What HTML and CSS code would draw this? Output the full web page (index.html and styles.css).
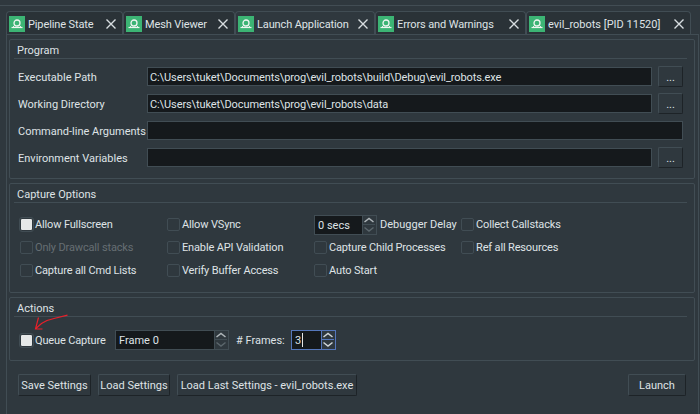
FILE: index.html
```html
<!DOCTYPE html>
<html lang="en">
<head>
<meta charset="utf-8">
<title>Launch Application</title>
<link rel="stylesheet" href="styles.css">
</head>
<body>
<svg width="0" height="0" class="defs">
  <symbol id="tab-icon" viewBox="0 0 16 16">
    <rect width="16" height="16" fill="#3cb474"/>
    <circle cx="8" cy="7" r="3" fill="none" stroke="#eef5f0" stroke-width="1.3"/>
    <path d="M2.5 11.500h11" stroke="#eef5f0" stroke-width="1.2"/>
    <path d="M5 9.800L4 11.500M11 9.800L12 11.500" stroke="#eef5f0" stroke-width="1"/>
  </symbol>
  <symbol id="close" viewBox="0 0 10 10">
    <path d="M.5.5l9 9M9.500.5l-9 9" stroke="#d8dde0" stroke-width="1.4"/>
  </symbol>
  <symbol id="up" viewBox="0 0 12 6"><path d="M1.5 5L6 1.500 10.500 5" fill="none" stroke="currentColor" stroke-width="1.5"/></symbol>
  <symbol id="down" viewBox="0 0 12 6"><path d="M1.5 1L6 4.500 10.500 1" fill="none" stroke="currentColor" stroke-width="1.5"/></symbol>
</svg>
<div class="topline"></div>
<div class="tabs">
  <div class="tab t1"><svg class="ticon"><use href="#tab-icon"/></svg><span class="tlabel">Pipeline State</span><svg class="tclose"><use href="#close"/></svg></div>
  <div class="tab t2"><svg class="ticon"><use href="#tab-icon"/></svg><span class="tlabel">Mesh Viewer</span><svg class="tclose"><use href="#close"/></svg></div>
  <div class="tab t3 active"><svg class="ticon"><use href="#tab-icon"/></svg><span class="tlabel">Launch Application</span><svg class="tclose"><use href="#close"/></svg></div>
  <div class="tab t4"><svg class="ticon"><use href="#tab-icon"/></svg><span class="tlabel">Errors and Warnings</span><svg class="tclose"><use href="#close"/></svg></div>
  <div class="tab t5"><svg class="ticon"><use href="#tab-icon"/></svg><span class="tlabel">evil_robots [PID 11520]</span><svg class="tclose"><use href="#close"/></svg></div>
</div>
<div class="pane">
  <section class="group g-program">
    <h2 class="gtitle">Program</h2>
    <div class="form">
      <label class="flabel">Executable Path</label><div class="edit">C:\Users\tuket\Documents\prog\evil_robots\build\Debug\evil_robots.exe</div><button class="btn dots">...</button>
      <label class="flabel">Working Directory</label><div class="edit">C:\Users\tuket\Documents\prog\evil_robots\data</div><button class="btn dots">...</button>
      <label class="flabel">Command-line Arguments</label><div class="edit wide"></div>
      <label class="flabel">Environment Variables</label><div class="edit"></div><button class="btn dots">...</button>
    </div>
  </section>
  <section class="group g-capture">
    <h2 class="gtitle">Capture Options</h2>
    <div class="opts">
      <div class="chk"><i class="box on"></i>Allow Fullscreen</div>
      <div class="chk"><i class="box"></i>Allow VSync</div>
      <div class="delay"><div class="spin s-delay"><span class="sval">0 secs</span><span class="arrows"><svg class="aup"><use href="#up"/></svg><svg class="adn dim"><use href="#down"/></svg></span></div><span>Debugger Delay</span></div>
      <div class="chk"><i class="box"></i>Collect Callstacks</div>
      <div class="chk disabled"><i class="box"></i>Only Drawcall stacks</div>
      <div class="chk"><i class="box"></i>Enable API Validation</div>
      <div class="chk"><i class="box"></i>Capture Child Processes</div>
      <div class="chk"><i class="box"></i>Ref all Resources</div>
      <div class="chk"><i class="box"></i>Capture all Cmd Lists</div>
      <div class="chk"><i class="box"></i>Verify Buffer Access</div>
      <div class="chk"><i class="box"></i>Auto Start</div>
    </div>
  </section>
  <section class="group g-actions">
    <h2 class="gtitle">Actions</h2>
    <div class="actions">
      <div class="chk qc"><i class="box on"></i>Queue Capture</div>
      <div class="spin s-frame"><span class="sval">Frame 0</span><span class="arrows"><svg class="aup"><use href="#up"/></svg><svg class="adn dim"><use href="#down"/></svg></span></div>
      <span class="flab"># Frames:</span>
      <div class="spin s-num focus"><span class="sval">3<b class="caret"></b></span><span class="arrows"><svg class="aup"><use href="#up"/></svg><svg class="adn"><use href="#down"/></svg></span></div>
    </div>
    <svg class="arrow" width="44" height="24" viewBox="0 0 44 24"><path d="M33.500 1.200L20 4.500 13 6.500 7.500 9.500 1.500 14.800M4.500 3.500L1.500 14.800 8.500 15" fill="none" stroke="#e8202a" stroke-width="1.2"/></svg>
  </section>
  <div class="footer">
    <button class="btn b-save">Save Settings</button>
    <button class="btn b-load">Load Settings</button>
    <button class="btn b-last">Load Last Settings - evil_robots.exe</button>
    <button class="btn launch">Launch</button>
  </div>
</div>
</body>
</html>
```

FILE: styles.css
```css
* { box-sizing: border-box; }
html, body { margin: 0; width: 700px; height: 414px; overflow: hidden; }
body { background: #2f383e; color: #dfe3e6; font: 11px/16px Roboto, "Noto Sans", sans-serif; }
.defs { position: absolute; }
.topline { height: 6px; border-bottom: 1px solid #424d54; }
.tabs { display: flex; height: 23px; margin: 5px 0 0 6px; }
.tab { display: flex; align-items: center; height: 24px; padding-left: 2px; border: 1px solid #414d54; border-bottom: 0; border-radius: 4px 4px 0 0; background: #2a3237; }
.tab.active { background: #2f383e; }
.t1 { width: 117px; } .t2 { width: 112px; } .t3 { width: 140px; } .t4 { width: 151px; } .t5 { width: 165px; }
.ticon { width: 16px; height: 16px; flex: none; }
.tlabel { margin-left: 3px; padding-top: 2px; white-space: nowrap; flex: 1; letter-spacing: -0.12px; }
.t5 .tlabel { letter-spacing: 0; }
.tclose { width: 10px; height: 10px; flex: none; margin-right: 6px; }
.pane { position: relative; margin: 0 1px 0 6px; height: 385px; border: 1px solid #414d54; border-bottom: 0; padding: 4px 3px 0 2px; }
.group { position: relative; border: 1px solid #414d54; border-radius: 2px; padding: 5px 7px 0 4px; }
.gtitle { margin: 0; font: inherit; padding-left: 3px; height: 14px; border-bottom: 1px solid #414d54; line-height: 12px; }
.g-program { height: 140px; }
.g-capture { height: 110px; margin-top: 4px; }
.g-actions { height: 64px; margin-top: 4px; }
.form { display: grid; grid-template-columns: 129px 505px 26px; grid-auto-rows: 27px; padding: 8px 0 0 4px; align-items: start; }
.flabel { line-height: 21px; white-space: nowrap; }
.edit { height: 19px; width: 505px; background: #15191c; border: 1px solid #414d54; padding: 0 2px; line-height: 19px; white-space: nowrap; letter-spacing: -0.1px; }
.edit.wide { grid-column: 2 / span 2; width: 536px; }
.btn { font: inherit; color: inherit; background: #2f383e; border: 1px solid #414d54; border-bottom-color: #1d2327; border-right-color: #1d2327; border-radius: 2px; height: 22px; padding: 2px 0 0; white-space: nowrap; }
.dots { width: 25px; height: 21px; margin-left: 6px; margin-top: -1px; line-height: 16px; }
.opts { display: grid; grid-template-columns: 147px 147px 147px 200px; grid-auto-rows: 23px; padding: 10px 0 0 6px; align-items: center; }
.chk { display: flex; align-items: center; white-space: nowrap; letter-spacing: -0.15px; }
.box { width: 13px; height: 13px; border: 1px solid #414d54; border-radius: 2px; margin-right: 2px; flex: none; }
.box.on { background: #e6e8e8; outline: 1px solid #414d54; border-color: #2f383e; }
.disabled { color: #666e73; }
.delay { display: flex; align-items: center; gap: 3px; margin-top: 1px; white-space: nowrap; }
.spin { display: flex; flex: none; height: 20px; border: 1px solid #414d54; }
.sval { flex: 1; background: #15191c; padding-left: 3px; line-height: 19px; }
.arrows { width: 14px; display: flex; flex-direction: column; color: #aeb5b9; flex: none; border-left: 1px solid #414d54; }
.aup, .adn { width: 12px; height: 9px; flex: none; padding: 1px 0; }
.aup { border-bottom: 1px solid #414d54; }
.dim { color: #5b666c; }
.s-delay { width: 63px; }
.actions { display: flex; align-items: center; padding: 13px 0 0 6px; }
.qc { width: 95px; padding-top: 1px; }
.s-frame { width: 114px; }
.flab { margin-left: 7px; width: 55px; padding-top: 2px; white-space: nowrap; }
.s-num { width: 45px; }
.focus { border-color: #5577bb; }
.focus .arrows { border-left-color: #5577bb; color: #cfd5d8; }
.focus .aup { border-bottom-color: #5577bb; }
.caret { display: inline-block; width: 1px; height: 14px; background: #e6e8e8; vertical-align: -3px; margin-left: 1px; }
.arrow { position: absolute; left: 24px; top: 16px; }
.footer { display: flex; gap: 7px; padding: 13px 0 0 9px; }
.b-save { width: 73px; } .b-load { width: 72px; } .b-last { width: 180px; }
.launch { margin-left: auto; margin-right: 9px; width: 58px; }
```
